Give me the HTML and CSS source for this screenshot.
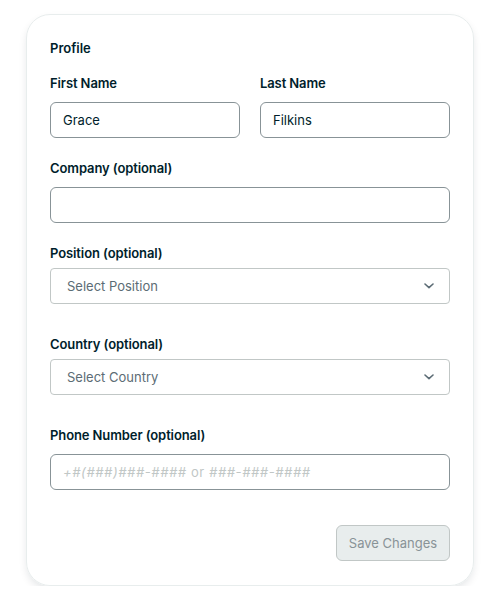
FILE: index.html
```html
<!DOCTYPE html>
<html>
<head>
<meta charset="utf-8">
<link rel="stylesheet" href="styles.css">
</head>
<body>
<div class="card">
  <div class="title">Profile</div>
  <div class="row">
    <div class="field">
      <div class="label">First Name</div>
      <div class="input">Grace</div>
    </div>
    <div class="field">
      <div class="label">Last Name</div>
      <div class="input">Filkins</div>
    </div>
  </div>
  <div class="label gap">Company (optional)</div>
  <div class="input"></div>
  <div class="label gap tight">Position (optional)</div>
  <div class="select">
    <span>Select Position</span>
    <svg class="chev" width="10" height="6" viewBox="0 0 10 6"><path d="M1 1l4 3.6L9 1" fill="none" stroke="#5c6c75" stroke-width="1.6" stroke-linecap="round" stroke-linejoin="round"/></svg>
  </div>
  <div class="label gap2 tight">Country (optional)</div>
  <div class="select">
    <span>Select Country</span>
    <svg class="chev" width="10" height="6" viewBox="0 0 10 6"><path d="M1 1l4 3.6L9 1" fill="none" stroke="#5c6c75" stroke-width="1.6" stroke-linecap="round" stroke-linejoin="round"/></svg>
  </div>
  <div class="label gap2">Phone Number (optional)</div>
  <div class="input placeholder"><span class="hash">+#(###)###-####</span> or <span class="hash">###-###-####</span></div>
  <div class="actions">
    <button class="btn">Save Changes</button>
  </div>
</div>
</body>
</html>
```
FILE: styles.css
```css
* { box-sizing: border-box; }
body {
  margin: 0;
  background: #ffffff;
  font-family: Inter, "Noto Sans", sans-serif;
  color: #001e2b;
}
.card {
  margin: 14px 0 0 26px;
  width: 448px;
  height: 572px;
  border: 1px solid #e8eded;
  border-radius: 24px;
  box-shadow: 0 4px 10px -2px rgba(0, 30, 43, 0.14);
  padding: 23px;
  display: flex;
  flex-direction: column;
}
.title {
  font-size: 13px;
  font-weight: 600;
  line-height: 20px;
  margin-bottom: 15px;
}
.row {
  display: flex;
  gap: 20px;
}
.field { flex: 1; }
.label {
  font-size: 13px;
  font-weight: 600;
  line-height: 20px;
  margin-bottom: 9px;
  letter-spacing: -0.1px;
}
.gap { margin-top: 20px; }
.gap2 { margin-top: 30px; }
.tight { margin-bottom: 5px; }
.input {
  height: 36px;
  border: 1px solid #889397;
  border-radius: 6px;
  padding: 0 12px;
  font-size: 13px;
  line-height: 34px;
  color: #001e2b;
}
.input.placeholder {
  color: #c1c7c6;
  letter-spacing: 0.6px;
}
.hash { font-style: italic; }
.select {
  height: 36px;
  border: 1px solid #c1c7c6;
  border-radius: 4px;
  padding: 0 15px 0 16px;
  font-size: 13px;
  color: #5c6c75;
  display: flex;
  align-items: center;
  justify-content: space-between;
}
.chev { display: block; }
.actions {
  margin-top: 35px;
  display: flex;
  justify-content: flex-end;
}
.btn {
  width: 114px;
  height: 36px;
  background: #e8eded;
  border: 1px solid #c1c7c6;
  border-radius: 6px;
  color: #889397;
  font-family: Inter, "Noto Sans", sans-serif;
  font-size: 13px;
  padding: 0;
}
```
